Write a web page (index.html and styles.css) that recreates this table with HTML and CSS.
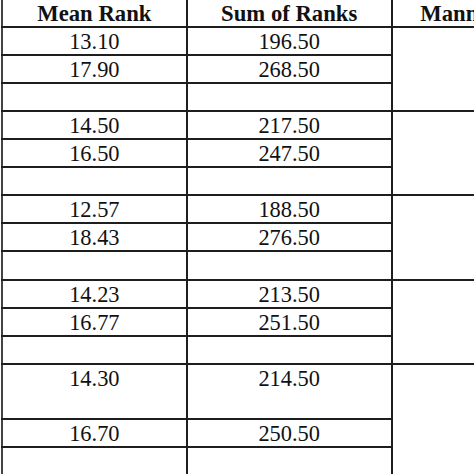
FILE: index.html
```html
<!DOCTYPE html>
<html>
<head>
<meta charset="utf-8">
<link rel="stylesheet" href="styles.css">
</head>
<body>
<table class="ranks">
  <colgroup>
    <col class="c1">
    <col class="c2">
    <col class="c3">
  </colgroup>
  <thead>
    <tr><th>Mean Rank</th><th>Sum of Ranks</th><th>Mann-Whitney U</th></tr>
  </thead>
  <tbody>
    <tr><td>13.10</td><td>196.50</td><td rowspan="3"></td></tr>
    <tr><td>17.90</td><td>268.50</td></tr>
    <tr><td></td><td></td></tr>
    <tr><td>14.50</td><td>217.50</td><td rowspan="3"></td></tr>
    <tr><td>16.50</td><td>247.50</td></tr>
    <tr><td></td><td></td></tr>
    <tr><td>12.57</td><td>188.50</td><td rowspan="3"></td></tr>
    <tr><td>18.43</td><td>276.50</td></tr>
    <tr><td></td><td></td></tr>
    <tr><td>14.23</td><td>213.50</td><td rowspan="3"></td></tr>
    <tr><td>16.77</td><td>251.50</td></tr>
    <tr><td></td><td></td></tr>
    <tr class="tall"><td>14.30</td><td>214.50</td><td rowspan="3"></td></tr>
    <tr><td>16.70</td><td>250.50</td></tr>
    <tr class="last"><td></td><td></td></tr>
  </tbody>
</table>
</body>
</html>
```
FILE: styles.css
```css
html, body {
  margin: 0;
  padding: 0;
  background: #ffffff;
  overflow: hidden;
}

.ranks {
  border-collapse: collapse;
  table-layout: fixed;
  width: 618px;
  margin: -2.4px 0 0 1px;
  font-family: "Liberation Serif", "Times New Roman", serif;
  color: #111111;
  border-left: 2px solid #444444;
}

.c1 { width: 184.7px; }
.c2 { width: 205px; }
.c3 { width: 228px; }

.ranks th,
.ranks td {
  border: 2px solid #1e1e1e;
  padding: 1.1px 0 0 0;
  line-height: 25px;
  height: 25px;
  text-align: center;
  vertical-align: top;
  white-space: nowrap;
  overflow: hidden;
}

.ranks th {
  font-size: 22.7px;
  font-weight: bold;
  border-top-color: #ffffff;
}

.ranks td {
  font-size: 22.4px;
  font-weight: normal;
}

.ranks tr.tall td {
  height: 52px;
}

.ranks tr.last td {
  height: 40px;
}

.ranks th:first-child,
.ranks td:first-child {
  border-left-color: #444444;
}
```
